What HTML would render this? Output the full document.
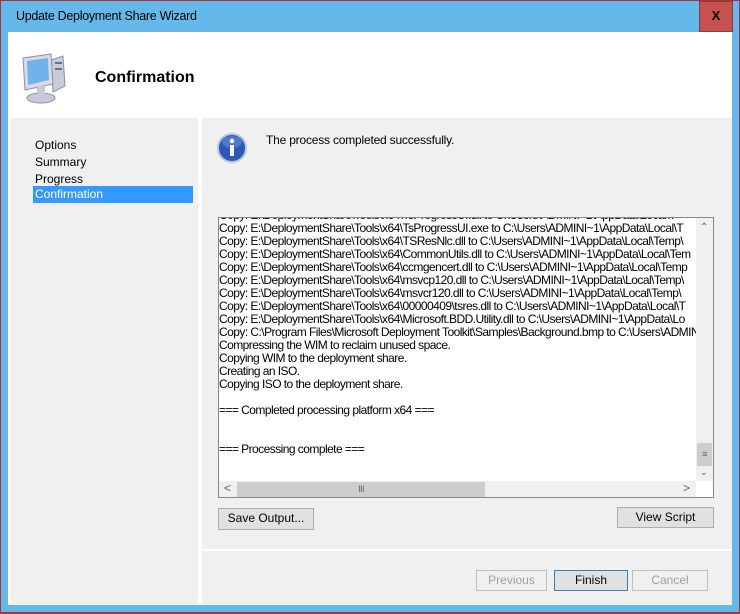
<!DOCTYPE html>
<html><head><style>
*{margin:0;padding:0;box-sizing:border-box}
body{width:740px;height:614px;background:#a9323c;position:relative;overflow:hidden;font-family:"Liberation Sans",Arial,sans-serif;font-size:12px;color:#000}
.a{position:absolute}
.btn{position:absolute;background:#e1e1e1;border:1px solid #adadad;text-align:center;line-height:19px;font-size:12px}
.log div{white-space:nowrap;height:13px;line-height:13px;letter-spacing:-0.55px}
</style></head><body>
<div class="a" style="left:1px;top:1px;width:738px;height:611px;background:#65b8ea"></div>
<div class="a" style="left:16px;top:9px;font-size:12.5px;letter-spacing:-0.3px">Update Deployment Share Wizard</div>
<div class="a" style="left:699px;top:1px;width:34px;height:31px;background:#c75050;border:1px solid #8b3a3a;text-align:center;font-weight:bold;font-size:13px;line-height:28px">X</div>
<div class="a" style="left:8px;top:32px;width:724px;height:573px;background:#fff"></div>
<svg class="a" style="left:15px;top:46px" width="60" height="60" viewBox="0 0 60 60">
<path d="M36 14 L48 10 L50 40 L38 46 Z" fill="#c9ccd8" stroke="#8a8fa6"/>
<rect x="40" y="16" width="7" height="2" fill="#6b7090"/>
<rect x="40" y="22" width="7" height="2" fill="#6b7090"/>
<path d="M8 12 L36 8 L38 38 L10 44 Z" fill="#d8dbe6" stroke="#8a8fa6"/>
<path d="M12 15 L33 12 L34 34 L13 39 Z" fill="#6fb2ee"/>
<ellipse cx="26" cy="52" rx="14" ry="5" fill="#c7c9d6" stroke="#8a8fa6"/>
<rect x="22" y="40" width="8" height="12" fill="#c7c9d6"/>
</svg>
<div class="a" style="left:95px;top:69px;font-size:16px;font-weight:bold">Confirmation</div>
<div class="a" style="left:10px;top:118px;width:188px;height:487px;background:#f0f0f0"></div>
<div class="a" style="left:202px;top:118px;width:530px;height:431px;background:#f0f0f0"></div>
<div class="a" style="left:202px;top:551px;width:530px;height:54px;background:#f0f0f0"></div>
<div class="a" style="left:35px;top:137px;line-height:17px">Options<br>Summary<br>Progress</div>
<div class="a" style="left:33px;top:186px;width:160px;height:17px;background:#3399ff;color:#fff;padding-left:2px;line-height:17px">Confirmation</div>
<svg class="a" style="left:216px;top:132px" width="32" height="32" viewBox="0 0 32 32">
<circle cx="16" cy="16" r="15" fill="#b8c4d8"/><circle cx="16" cy="16" r="13" fill="#2d58b8"/>
<ellipse cx="16" cy="10" rx="10" ry="6" fill="#6a8fd8" opacity=".6"/>
<circle cx="16" cy="9" r="2.2" fill="#fff"/><rect x="14" y="13" width="4" height="11" fill="#fff"/>
</svg>
<div class="a" style="left:266px;top:133px;letter-spacing:-0.2px">The process completed successfully.</div>
<div class="a log" style="left:218px;top:217px;width:496px;height:281px;background:#fff;border:1px solid #828790;overflow:hidden">
<div style="margin-top:-9px;margin-left:0px">
<div>Copy: E:\DeploymentShare\Tools\x64\TsProgressUI.dll to C:\Users\ADMINI~1\AppData\Local\T</div>
<div>Copy: E:\DeploymentShare\Tools\x64\TsProgressUI.exe to C:\Users\ADMINI~1\AppData\Local\T</div>
<div>Copy: E:\DeploymentShare\Tools\x64\TSResNlc.dll to C:\Users\ADMINI~1\AppData\Local\Temp\</div>
<div>Copy: E:\DeploymentShare\Tools\x64\CommonUtils.dll to C:\Users\ADMINI~1\AppData\Local\Tem</div>
<div>Copy: E:\DeploymentShare\Tools\x64\ccmgencert.dll to C:\Users\ADMINI~1\AppData\Local\Temp</div>
<div>Copy: E:\DeploymentShare\Tools\x64\msvcp120.dll to C:\Users\ADMINI~1\AppData\Local\Temp\</div>
<div>Copy: E:\DeploymentShare\Tools\x64\msvcr120.dll to C:\Users\ADMINI~1\AppData\Local\Temp\</div>
<div>Copy: E:\DeploymentShare\Tools\x64\00000409\tsres.dll to C:\Users\ADMINI~1\AppData\Local\T</div>
<div>Copy: E:\DeploymentShare\Tools\x64\Microsoft.BDD.Utility.dll to C:\Users\ADMINI~1\AppData\Lo</div>
<div>Copy: C:\Program Files\Microsoft Deployment Toolkit\Samples\Background.bmp to C:\Users\ADMIN</div>
<div>Compressing the WIM to reclaim unused space.</div>
<div>Copying WIM to the deployment share.</div>
<div>Creating an ISO.</div>
<div>Copying ISO to the deployment share.</div>
<div></div>
<div>=== Completed processing platform x64 ===</div>
<div></div><div></div>
<div>=== Processing complete ===</div>
</div>
<div class="a" style="left:477px;top:0;width:17px;height:263px;background:#f0f0f0"></div>
<div class="a" style="left:481px;top:3px;font-size:10px;color:#606060">&#8963;</div>
<div class="a" style="left:478px;top:225px;width:15px;height:23px;background:#cdcdcd;text-align:center;font-size:9px;line-height:23px;color:#606060">&#8801;</div>
<div class="a" style="left:481px;top:248px;font-size:9px;color:#606060">&#8964;</div>
<div class="a" style="left:0;top:263px;width:477px;height:17px;background:#f0f0f0"></div>
<div class="a" style="left:18px;top:264px;width:248px;height:15px;background:#cdcdcd;text-align:center;font-size:9px;line-height:15px;color:#606060">III</div>
<div class="a" style="left:5px;top:264px;color:#606060">&lt;</div>
<div class="a" style="left:464px;top:264px;color:#606060">&gt;</div>
</div>
<div class="btn" style="left:218px;top:508px;width:96px;height:22px">Save Output...</div>
<div class="btn" style="left:617px;top:507px;width:97px;height:21px">View Script</div>
<div class="btn" style="left:476px;top:570px;width:71px;height:21px;color:#a0a0a0;background:#f0f0f0;border-color:#bfbfbf">Previous</div>
<div class="btn" style="left:554px;top:570px;width:74px;height:21px;border-color:#3c7fb1">Finish</div>
<div class="btn" style="left:632px;top:570px;width:76px;height:21px;color:#a0a0a0;background:#f0f0f0;border-color:#bfbfbf">Cancel</div>
</body></html>
